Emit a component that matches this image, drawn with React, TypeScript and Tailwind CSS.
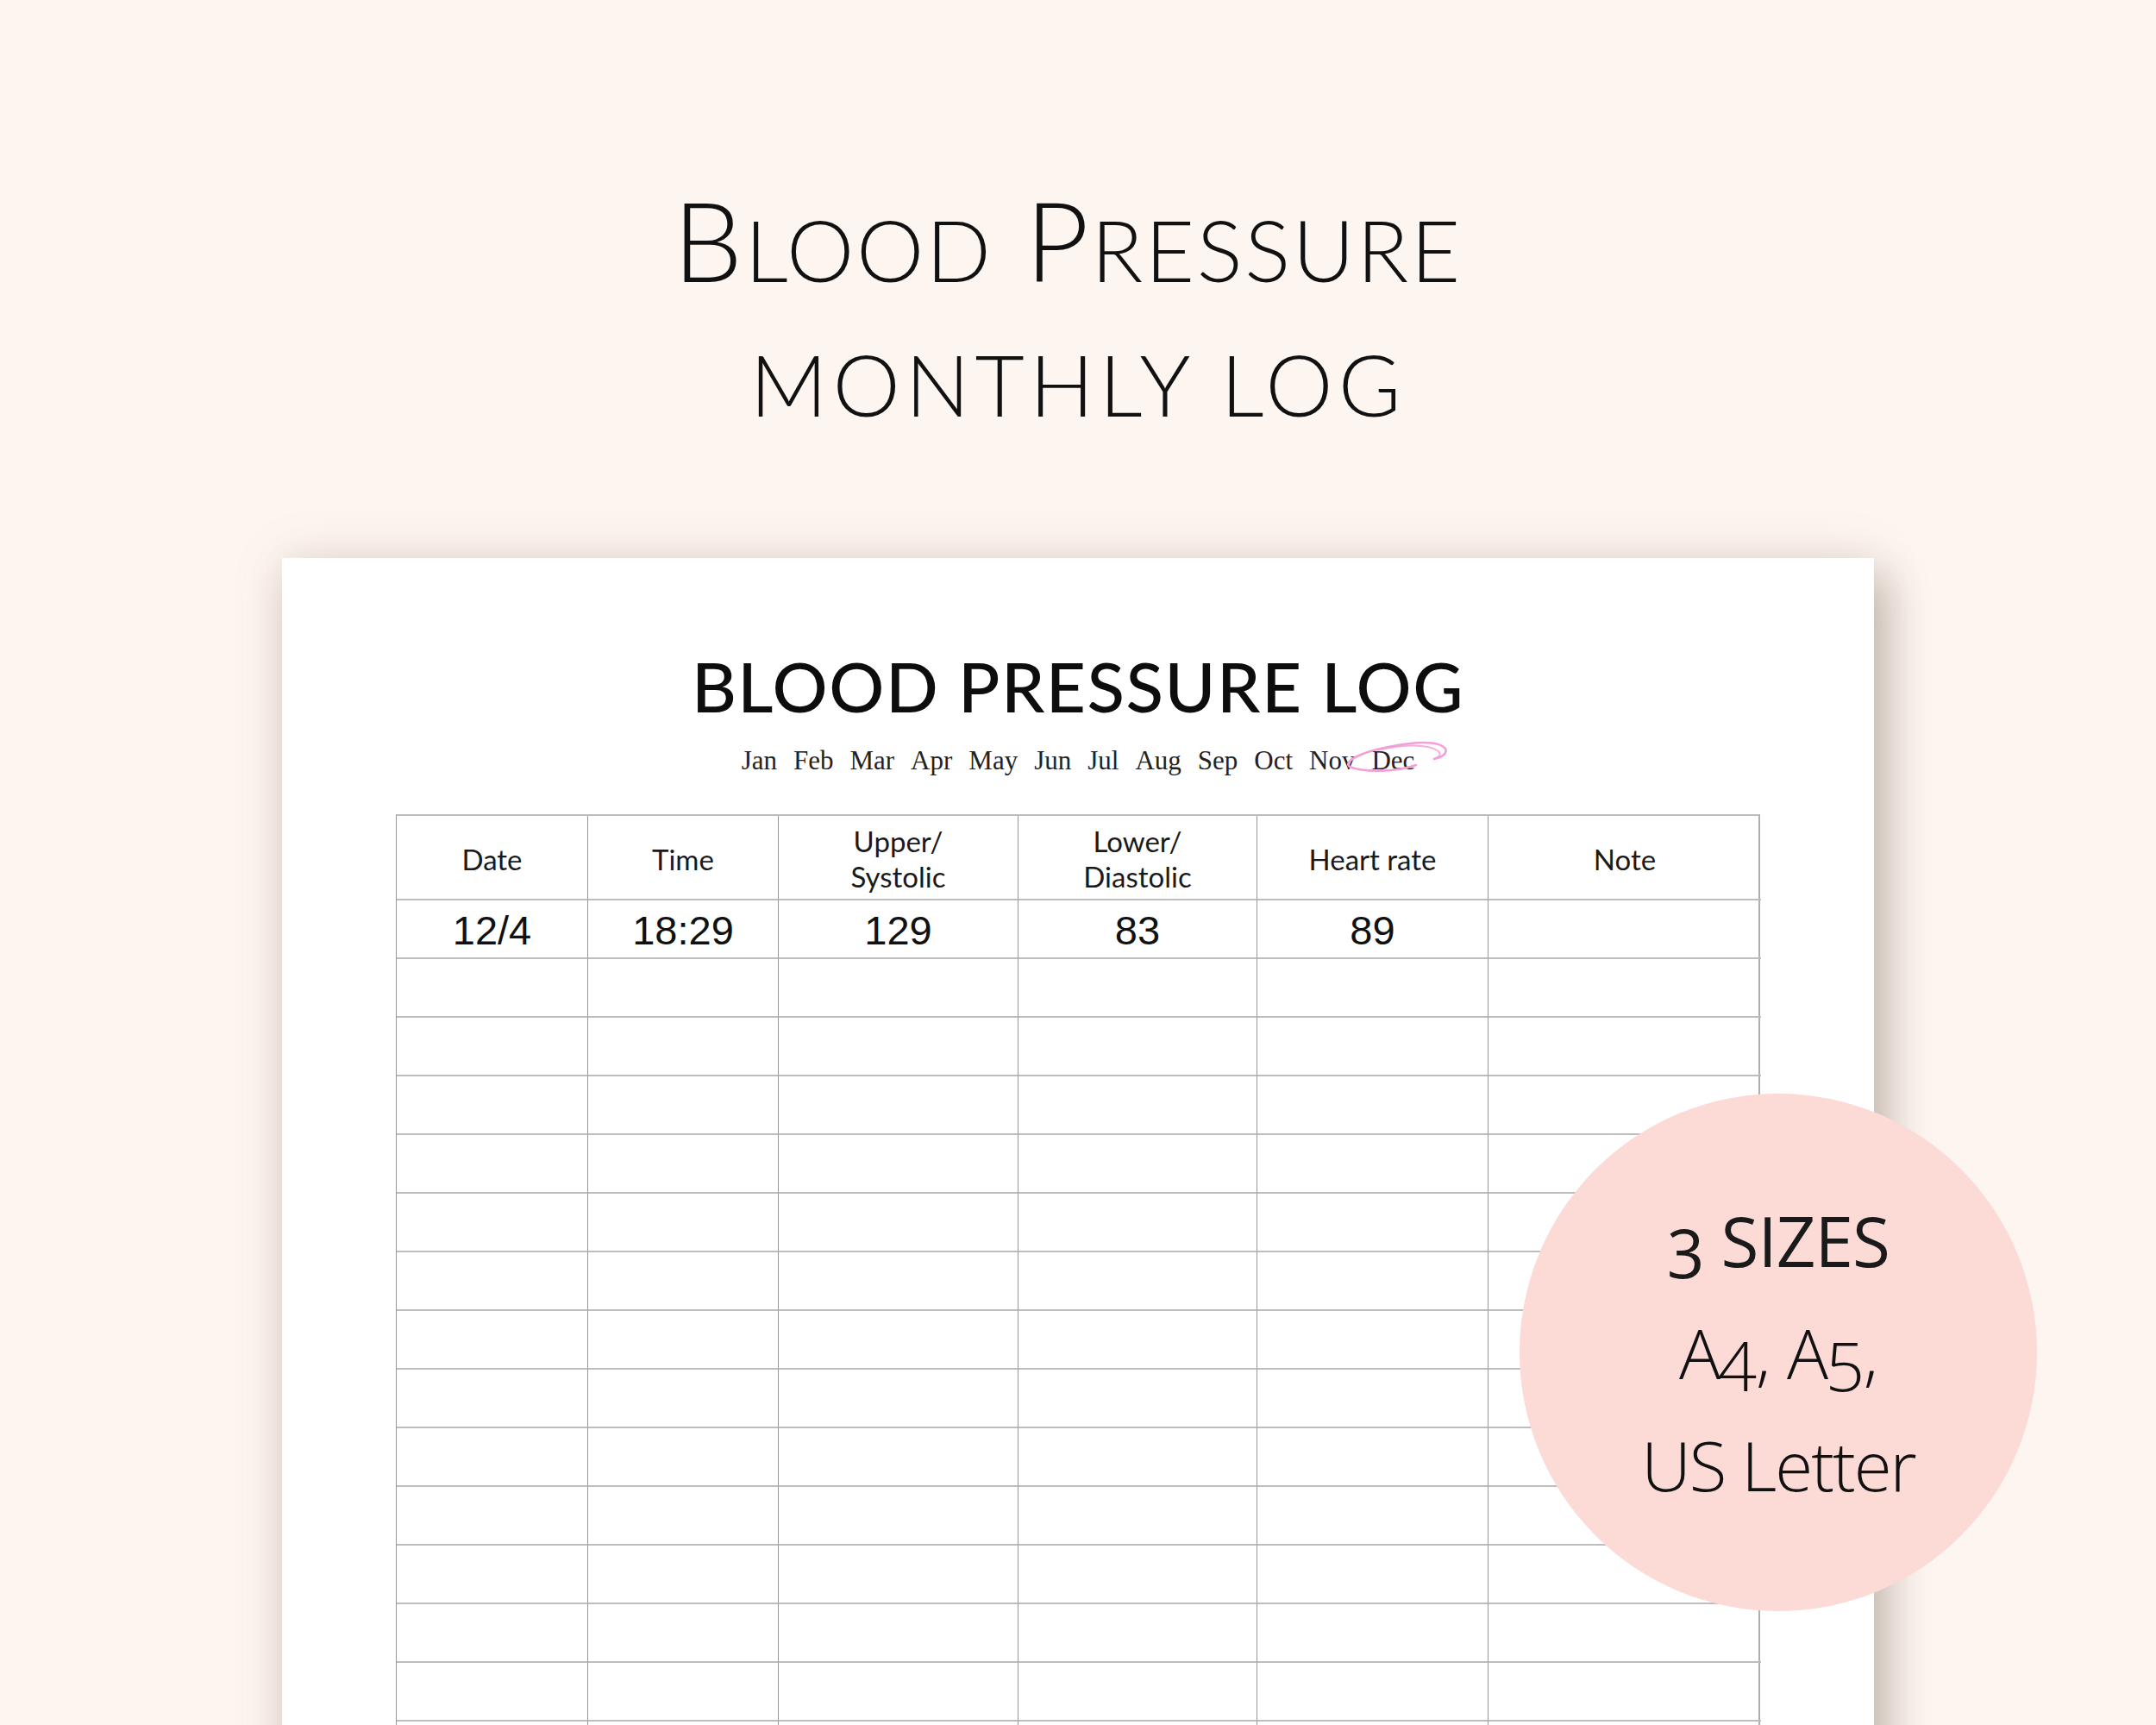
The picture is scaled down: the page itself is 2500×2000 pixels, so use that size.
import React from "react";

const cols = [222, 221, 278, 277, 268, 316];

function HeaderCell({ children, last }: { children: React.ReactNode; last?: boolean }) {
  return (
    <div
      className={`flex items-center justify-center pt-[4px] border-b-2 border-b-[#bdbdbd] ${last ? "" : "border-r border-r-[#979797]"} text-center text-[33px] leading-[41px] text-[#1a1a1a] font-['Lato',sans-serif] font-normal`}
    >
      {children}
    </div>
  );
}

function DataCell({ children, last }: { children?: React.ReactNode; last?: boolean }) {
  return (
    <div
      className={`flex items-center justify-center pt-[2px] border-b-2 border-b-[#bdbdbd] ${last ? "" : "border-r border-r-[#979797]"} text-[47px] leading-none text-[#111] font-['Liberation_Sans',Arial,sans-serif]`}
    >
      {children}
    </div>
  );
}

const months = ["Jan", "Feb", "Mar", "Apr", "May", "Jun", "Jul", "Aug", "Sep", "Oct", "Nov"];

export default function App() {
  const emptyRows = Array.from({ length: 14 });
  return (
    <div className="relative w-[2500px] h-[2000px] overflow-hidden bg-[#fdf5f0]">
      {/* Big heading */}
      <div className="flex flex-col items-center pt-[214px] text-[#111] font-['Lato',sans-serif] font-light">
        <div className="text-[128px] leading-none tracking-[2.5px] whitespace-nowrap -translate-x-[12px]">
          <span>B</span>
          <span className="text-[99px]">LOOD</span>
          <span> P</span>
          <span className="text-[99px]">RESSURE</span>
        </div>
        <div className="mt-[53px] text-[99px] leading-none tracking-[6px] whitespace-nowrap">MONTHLY LOG</div>
      </div>

      {/* Paper */}
      <div className="ml-[327px] mt-[153px] w-[1846px] h-[1500px] bg-white shadow-[0_0_55px_rgba(140,110,90,0.16),16px_24px_46px_rgba(70,50,40,0.28)] flex flex-col items-center pt-[108px]">
        <div className="text-[80px] leading-none font-medium tracking-[1.5px] text-[#0d0d0d] font-['Lato',sans-serif] whitespace-nowrap">
          BLOOD PRESSURE LOG
        </div>
        <div className="mt-[31px] flex gap-[19px] text-[31px] leading-none text-[#222] font-['Liberation_Serif','Times_New_Roman',serif] whitespace-nowrap">
          {months.map((m) => (
            <span key={m}>{m}</span>
          ))}
          <span className="relative">
            Dec
            <svg
              className="absolute left-[-30px] top-[-8px] w-[118px] h-[40px] overflow-visible"
              viewBox="0 0 118 40"
              fill="none"
            >
              <path
                d="M82 29 C60 37, 22 38, 5 31 C-3 25, 18 14, 50 8 C80 2, 108 0, 116 10 C119 16, 111 20, 103 22"
                stroke="#f3a0d6"
                strokeWidth="2.6"
                strokeLinecap="round"
              />
              <path
                d="M38 12 C66 5, 96 4, 108 13 C112 17, 108 20, 104 21"
                stroke="#f3a0d6"
                strokeWidth="1.8"
                strokeLinecap="round"
                opacity="0.85"
              />
            </svg>
          </span>
        </div>

        {/* Table */}
        <div
          className="mt-[47px] grid border-t-2 border-t-[#bdbdbd] border-l border-l-[#979797] border-r-2 border-r-[#b0b0b0]"
          style={{ gridTemplateColumns: cols.map((c) => `${c}px`).join(" "), width: 1582 }}
        >
          {[
            "Date",
            "Time",
            <>
              Upper/
              <br />
              Systolic
            </>,
            <>
              Lower/
              <br />
              Diastolic
            </>,
            "Heart rate",
            "Note",
          ].map((h, i) => (
            <div key={i} className="h-[98px] grid">
              <HeaderCell last={i === 5}>{h}</HeaderCell>
            </div>
          ))}
          {["12/4", "18:29", "129", "83", "89", ""].map((d, i) => (
            <div key={"d" + i} className="h-[68px] grid">
              <DataCell last={i === 5}>{d}</DataCell>
            </div>
          ))}
          {emptyRows.map((_, r) =>
            cols.map((_, i) => (
              <div key={`r${r}c${i}`} className="h-[68px] grid">
                <DataCell last={i === 5} />
              </div>
            ))
          )}
        </div>
      </div>

      {/* Sizes badge */}
      <div className="absolute left-[1762px] top-[1268px] w-[600px] h-[600px] rounded-full bg-[#fcdad6] flex flex-col items-center justify-center text-[#111] font-['Open_Sans',sans-serif] text-[80px] leading-[130px] oldstyle-nums">
        <div className="font-normal tracking-[-1px] text-[#1a1a1a]">3 SIZES</div>
        <div className="font-light tracking-[-1px]">A4, A5,</div>
        <div className="font-light tracking-[-2px]">US Letter</div>
      </div>
    </div>
  );
}
